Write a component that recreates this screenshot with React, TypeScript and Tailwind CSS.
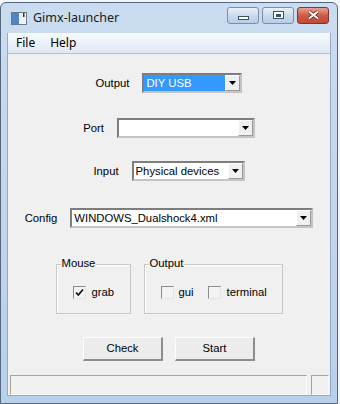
import React from "react";

const ui = { fontFamily: '"Liberation Sans", Arial, sans-serif' };
const seg = { fontFamily: '"Noto Sans", "Open Sans", sans-serif' };

function Arrow() {
  return (
    <div className="w-[15px] h-full shrink-0 bg-[#f0f0f0] border-t border-l border-t-white border-l-white border-b border-r border-b-[#9a9a9a] border-r-[#9a9a9a] flex items-center justify-center">
      <svg width="7" height="4" viewBox="0 0 7 4">
        <path d="M0 0 H7 L3.5 4 Z" fill="#000" />
      </svg>
    </div>
  );
}

function Combo({ w, text, selected }: { w: string; text?: string; selected?: boolean }) {
  return (
    <div
      className={`${w} h-[20px] border-2 border-t-[#7d7d7d] border-l-[#7d7d7d] border-b-[#c4c4c4] border-r-[#c4c4c4] bg-white flex items-stretch`}
    >
      <div className="flex-1 flex items-center min-w-0">
        {text && (
          <span
            className={
              selected
                ? "h-full flex-1 bg-[#3399ff] text-white pl-[2px] flex items-center"
                : "pl-[2px] text-black"
            }
          >
            {text}
          </span>
        )}
      </div>
      <Arrow />
    </div>
  );
}

function Row({ label, children }: { label: string; children: React.ReactNode }) {
  return (
    <div className="flex items-center justify-center gap-[13px]">
      <span>{label}</span>
      {children}
    </div>
  );
}

function Check({ on, label, gap }: { on?: boolean; label: string; gap: string }) {
  return (
    <div className={`flex items-center ${gap}`}>
      <div className="w-[13px] h-[13px] border border-t-[#8c8c8c] border-l-[#8c8c8c] border-b-[#e4e4e4] border-r-[#e4e4e4] bg-[#f3f3f3] flex items-center justify-center">
        {on && (
          <svg width="9" height="9" viewBox="0 0 9 9">
            <path d="M1 4.5 L3.3 7 L8 1.5" stroke="#111" strokeWidth="1.8" fill="none" />
          </svg>
        )}
      </div>
      <span>{label}</span>
    </div>
  );
}

function Group({ title, w, children }: { title: string; w: string; children: React.ReactNode }) {
  return (
    <div className={`${w} relative pt-[7px]`}>
      <div className="h-[50px] border border-[#c8c8c8] shadow-[inset_1px_1px_0_#fff] pt-[7px] pl-[16px] flex items-center gap-[14px]">
        {children}
      </div>
      <span className="absolute left-[5px] top-0 leading-[13px] bg-[#f0f0f0] px-[1px]">{title}</span>
    </div>
  );
}

function Btn({ label }: { label: string }) {
  return (
    <div className="w-[80px] h-[24px] bg-[#ececec] border-t border-l border-t-[#fdfdfd] border-l-[#fdfdfd] border-b-2 border-r-2 border-b-[#8d8d8d] border-r-[#8d8d8d] flex items-center justify-center">
      {label}
    </div>
  );
}

function CapBtn({ kind }: { kind: "min" | "max" | "close" }) {
  const base = "w-[32px] h-[17px] rounded-[3px] border flex items-center justify-center";
  if (kind === "close")
    return (
      <div className={`${base} border-[#7a3a33] bg-gradient-to-b from-[#e8a293] via-[#cf5a45] to-[#c44a36]`}>
        <svg width="13" height="10" viewBox="0 0 13 10">
          <path d="M2 1.5 L11 8.5 M11 1.5 L2 8.5" stroke="#5a1a12" strokeWidth="3.4" />
          <path d="M2 1.5 L11 8.5 M11 1.5 L2 8.5" stroke="#fff" strokeWidth="2" />
        </svg>
      </div>
    );
  return (
    <div className={`${base} border-[#7d8fa8] bg-gradient-to-b from-[#e9f1fa] via-[#cbdbee] to-[#b7cce5]`}>
      {kind === "min" ? (
        <div className="w-[11px] h-[4px] bg-white border border-[#3e4f66] mt-[6px]" />
      ) : (
        <div className="w-[11px] h-[8px] border border-[#3e4f66] bg-white flex items-center justify-center">
          <div className="w-[5px] h-[3px] bg-[#3e4f66]" />
        </div>
      )}
    </div>
  );
}

export default function App() {
  return (
    <div className="w-[340px] h-[404px] bg-[#f4f6f9] overflow-hidden pt-[2px] text-[11.3px] text-black" style={ui}>
      <div className="w-[338px] h-[402px] rounded-t-[6px] border border-[#56677d] bg-gradient-to-b from-[#cadcf0] to-[#b9d0ea] flex flex-col">
        {/* Title bar */}
        <div className="h-[30px] flex items-center pl-[10px] pr-[8px] shrink-0">
          <svg width="16" height="13" viewBox="0 0 16 13">
            <rect x="0.5" y="0.5" width="15" height="12" fill="#eef2f6" stroke="#6c7787" />
            <rect x="1" y="1" width="7" height="11" fill="#4f86c6" />
            <rect x="12" y="1" width="1.5" height="4" fill="#333" />
          </svg>
          <span className="ml-[6px] text-[12.5px] text-[#1b1b1b]" style={seg}>
            Gimx-launcher
          </span>
          <div className="ml-auto flex gap-[3px] mt-[-6px]">
            <CapBtn kind="min" />
            <CapBtn kind="max" />
            <CapBtn kind="close" />
          </div>
        </div>

        <div className="mx-[6px] flex-1 flex flex-col border border-t-0 border-[#93a9c4]">
          {/* Menu bar */}
          <div
            className="h-[21px] shrink-0 flex items-center gap-[15px] pl-[8px] text-[12px] bg-gradient-to-b from-[#f7fafd] to-[#dfe8f3] border-b border-[#b3c0cf]"
            style={seg}
          >
            <span>File</span>
            <span>Help</span>
          </div>

          {/* Client */}
          <div className="flex-1 bg-[#f0f0f0] flex flex-col pt-[19px]">
            <Row label="Output">
              <Combo w="w-[100px]" text="DIY USB" selected />
            </Row>
            <div className="mt-[25px]">
              <Row label="Port">
                <Combo w="w-[138px]" />
              </Row>
            </div>
            <div className="mt-[23px]">
              <Row label="Input">
                <Combo w="w-[113px]" text="Physical devices" />
              </Row>
            </div>
            <div className="mt-[27px]">
              <Row label="Config">
                <Combo w="w-[243px]" text="WINDOWS_Dualshock4.xml" />
              </Row>
            </div>

            <div className="mt-[29px] flex justify-center gap-[13px]">
              <Group title="Mouse" w="w-[75px]">
                <Check on label="grab" gap="gap-[6px]" />
              </Group>
              <Group title="Output" w="w-[139px]">
                <Check label="gui" gap="gap-[5px]" />
                <Check label="terminal" gap="gap-[6px]" />
              </Group>
            </div>

            <div className="mt-[23px] flex justify-center gap-[12px]">
              <Btn label="Check" />
              <Btn label="Start" />
            </div>

            {/* Status bar */}
            <div className="mt-auto h-[20px] flex gap-[4px] pl-[2px] pr-[1px]">
              <div className="flex-1 border-t border-l border-[#a3a3a3] border-b border-r border-b-[#fafafa] border-r-[#fafafa]" />
              <div className="w-[18px] border-t border-l border-[#a3a3a3] border-b border-r border-b-[#fafafa] border-r-[#fafafa]" />
            </div>
          </div>
        </div>
        <div className="h-[7px] shrink-0" />
      </div>
    </div>
  );
}
